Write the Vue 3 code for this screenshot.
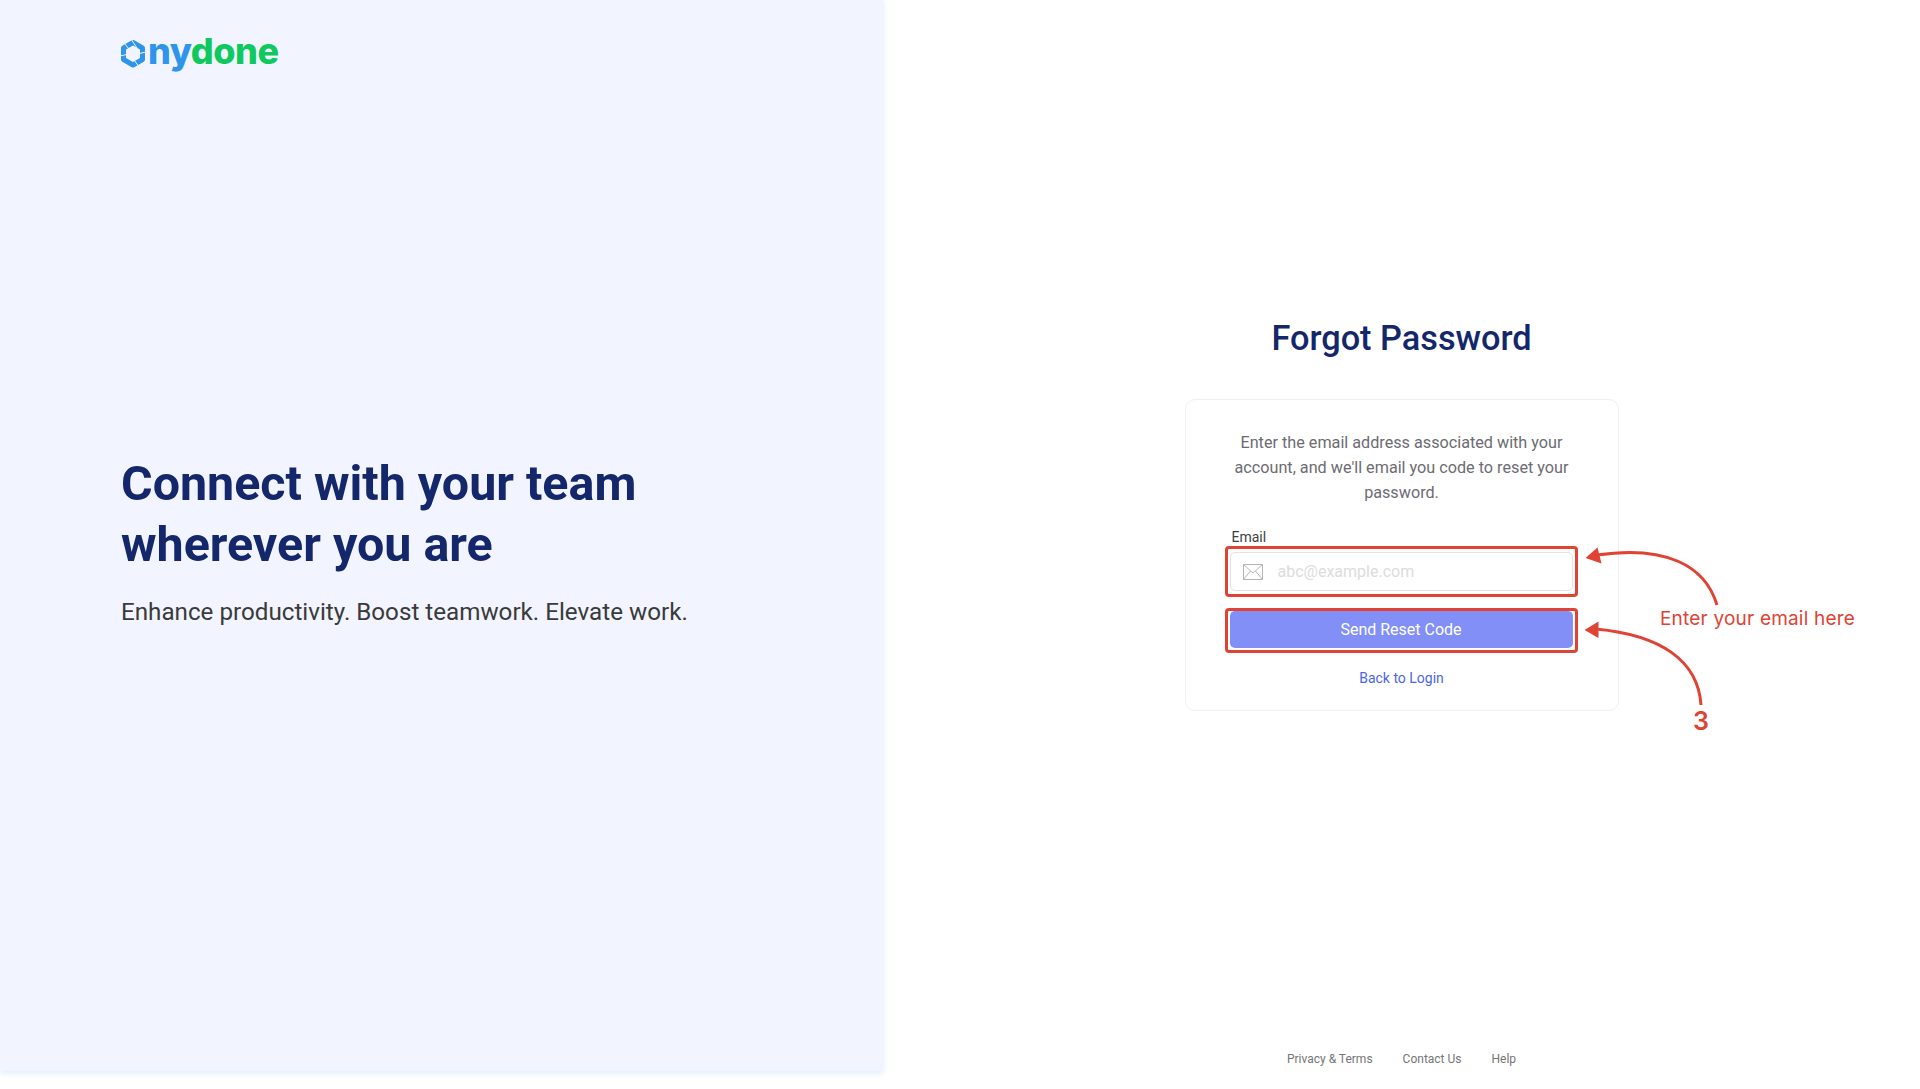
<template>
  <div class="page">
    <aside class="intro">
      <div class="logo">
        <svg class="logo-mark" viewBox="0 0 28 30" width="28" height="30">
          <path d="M14 3.500 23.500 9v11.500L14 26 4.500 20.500V9Z" fill="none" stroke="#2f95ea" stroke-width="5" stroke-linejoin="round" />
          <path d="M12 0 18 9M27 13 18 15M21 29l-6-8M1 17l9-2M5 4l5 6" stroke="#f2f5ff" stroke-width="1" />
        </svg>
        <span class="logo-text"><span class="ny">ny</span><span class="done">done</span></span>
      </div>
      <div class="hero">
        <h1>Connect with your team<br />wherever you are</h1>
        <p>Enhance productivity. Boost teamwork. Elevate work.</p>
      </div>
    </aside>

    <main class="side">
      <div class="center">
        <h2>Forgot Password</h2>
        <section class="card">
          <p class="lead">Enter the email address associated with your account, and we'll email you code to reset your password.</p>
          <label class="label">Email</label>
          <div class="mark mark-input">
            <div class="field">
              <svg class="mail" viewBox="0 0 20 16" width="20" height="16">
                <path d="M.5.5h19v15H.5ZM.5.5 10 9 19.500.5M.5 15.500 7.500 7M19.500 15.500 12.500 7" fill="none" stroke="#b5b5b5" stroke-width="1" />
              </svg>
              <span class="placeholder">abc@example.com</span>
            </div>
          </div>
          <div class="mark mark-btn">
            <button class="send">Send Reset Code</button>
          </div>
          <a class="back">Back to Login</a>
        </section>
      </div>
      <footer class="links">
        <a>Privacy &amp; Terms</a>
        <a>Contact Us</a>
        <a>Help</a>
      </footer>
    </main>

    <svg class="notes" viewBox="0 0 1920 1089" width="1920" height="1089">
      <path d="M1717 605C1705 565 1665 545 1597 555" fill="none" stroke="#e04234" stroke-width="3" />
      <path d="M1585.500 558 1597.500 547.500 1601.500 563.500Z" fill="#e04234" />
      <path d="M1701 705C1698 660 1660 635 1596 629" fill="none" stroke="#e04234" stroke-width="3" />
      <path d="M1584.500 630 1598.500 621.500 1598.500 638Z" fill="#e04234" />
    </svg>
    <span class="note-text">Enter your email here</span>
    <span class="note-num">3</span>
  </div>
</template>

<script setup>
</script>

<style>
html, body { margin: 0; background: #fff; }
</style>

<style scoped>
.page { position: relative; display: flex; width: 1920px; height: 1089px; overflow: hidden;
        font-family: Roboto, "Liberation Sans", sans-serif; background: #fff; }
.intro { width: 883px; height: 1071px; background: #f2f5ff; box-sizing: border-box; padding: 27px 0 0 121px;
         box-shadow: 0 2px 6px rgba(195, 225, 245, 0.6); flex-shrink: 0; }
.logo { display: flex; align-items: center; gap: 0; height: 48px; margin-left: -2px; }
.logo-mark { margin-top: 6px; flex-shrink: 0; }
.logo-text { font-family: Inter, sans-serif; font-weight: 800; font-size: 36px; letter-spacing: -0.5px; line-height: 1; margin-left: 1px; }
.ny { color: #2f95ea; }
.done { color: #0fc95f; }
.hero { margin-top: 378px; }
.hero h1 { margin: 0; font-size: 48.4px; line-height: 61px; font-weight: 700; color: #14276b; }
.hero p { margin: 21px 0 0; font-size: 24.2px; line-height: 32px; color: #3a3a3a; }
.side { flex: 1; display: flex; flex-direction: column; align-items: center; }
.center { flex: 1; padding-top: 316px; display: flex; flex-direction: column; align-items: center; }
.center h2 { margin: 0; font-size: 34.3px; line-height: 44px; font-weight: 500; color: #14276b; }
.card { width: 434px; height: 312px; margin-top: 39px; box-sizing: border-box; padding: 30px 40px 0; border: 1px solid #f0f0f0;
        border-radius: 10px; display: flex; flex-direction: column; }
.lead { margin: 0; padding: 0 2px; text-align: center; font-size: 16.2px; line-height: 25px; color: #6c6c72; }
.label { margin: 24px 0 0 6px; font-size: 14px; line-height: 17px; color: #3f3f3f; }
.mark { border: 3.5px solid #e04234; border-radius: 4px; box-sizing: border-box; margin-left: -1px; }
.mark-input { height: 51px; padding: 3px 2px 2px; }
.mark-btn { height: 45px; margin-top: 11px; padding: 0 2px 3px; display: flex; align-items: center; }
.field { flex: 1; height: 39px; box-sizing: border-box; border: 1px solid #e2e2e2; border-radius: 5px; display: flex; align-items: center; padding-left: 12px; }
.mail { flex-shrink: 0; }
.placeholder { margin-left: 15px; font-size: 16px; color: #dcdcdc; }
.send { width: 100%; height: 37px; border: 0; border-radius: 5px; background: #828ff7; color: #fff; font-family: inherit; font-size: 16px; }
.back { margin-top: 17px; text-align: center; font-size: 14px; color: #4a66e8; }
.links { height: 59px; display: flex; gap: 30px; font-size: 12px; color: #757575; box-sizing: border-box; padding-top: 22px; }
.notes { position: absolute; left: 0; top: 0; pointer-events: none; }
.note-text { position: absolute; left: 1660px; top: 608px; font-family: Inter, sans-serif; font-size: 19px; letter-spacing: 0.2px; line-height: 22px; color: #e04234; }
.note-num { position: absolute; left: 1693px; top: 706px; font-family: Inter, sans-serif; font-size: 25px; line-height: 30px; font-weight: 600; color: #e04234; }
</style>
